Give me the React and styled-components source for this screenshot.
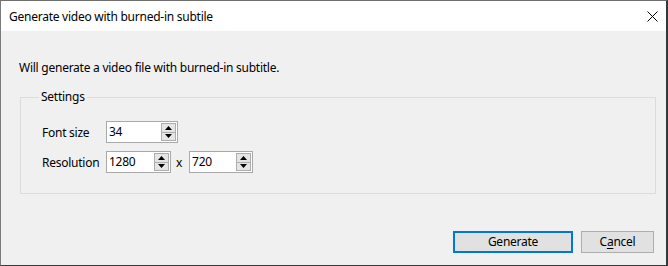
import React from 'react'
import styled, { createGlobalStyle } from 'styled-components'

const Global = createGlobalStyle`
  html, body { margin: 0; padding: 0; background: #f0f0f0; }
  body { font-family: "Noto Sans", "Open Sans", sans-serif; font-size: 12px; color: #000; letter-spacing: -0.25px; }
  * { box-sizing: border-box; }
`

const Window = styled.div`
  width: 668px;
  height: 266px;
  display: flex;
  flex-direction: column;
  background: #f0f0f0;
  border-left: 1px solid #7a7a7a;
  border-top: 1px solid #6f6f6f;
  border-right: 2px solid #2e3b3b;
  border-bottom: 1px solid #3a3a3a;
`

const TitleBar = styled.div`
  height: 30px;
  flex: none;
  background: #fff;
  display: flex;
  align-items: center;
  justify-content: space-between;
  padding-left: 8px;
`

const Title = styled.span`
  font-size: 12px;
`

const CloseButton = styled.div`
  width: 28px;
  height: 30px;
  display: flex;
  align-items: center;
  justify-content: center;
`

const Body = styled.div`
  flex: 1;
  display: flex;
  flex-direction: column;
  padding: 29px 12px 12px 18px;
`

const Intro = styled.div`
  line-height: 16px;
`

const Group = styled.fieldset`
  margin: 14px 0 0 1px;
  width: 636px;
  height: 104px;
  border: 1px solid #dcdcdc;
  padding: 17px 0 0 21px;
  display: flex;
  flex-direction: column;
  gap: 8px;
`

const Legend = styled.legend`
  padding: 0 2px;
  margin-left: -3px;
  line-height: 14px;
`

const Row = styled.div`
  display: flex;
  align-items: center;
  height: 22px;
`

const Label = styled.span`
  width: 64px;
`

const Spin = styled.div`
  width: ${p => p.$w}px;
  height: 22px;
  border: 1px solid #a9a9a9;
  background: #fff;
  display: flex;
  align-items: stretch;
  padding: 1px;
`

const Value = styled.div`
  flex: 1;
  padding-left: 1px;
  line-height: 18px;
`

const Arrows = styled.div`
  width: 15px;
  display: flex;
  flex-direction: column;
`

const ArrowBtn = styled.div`
  flex: 1;
  background: #e5e5e5;
  border: 1px solid #adadad;
  display: flex;
  align-items: center;
  justify-content: center;
  & + & { border-top: none; }
`

const Times = styled.span`
  margin: 0 7px 0 5px;
`

const Footer = styled.div`
  margin-top: auto;
  display: flex;
  justify-content: flex-end;
  gap: 8px;
`

const Button = styled.div`
  width: ${p => p.$w}px;
  height: 22px;
  background: #e1e1e1;
  border: ${p => (p.$default ? '2px solid #0078d7' : '1px solid #adadad')};
  display: flex;
  align-items: center;
  justify-content: center;
  line-height: 16px;
  u { text-decoration-thickness: 1px; text-underline-offset: 2px; }
`

const Tri = ({ up }) => (
  <svg width="7" height="4" viewBox="0 0 7 4">
    <path d={up ? 'M0 4 L3.5 0 L7 4 Z' : 'M0 0 L3.5 4 L7 0 Z'} fill="#000" />
  </svg>
)

const Spinner = ({ value, width }) => (
  <Spin $w={width}>
    <Value>{value}</Value>
    <Arrows>
      <ArrowBtn><Tri up /></ArrowBtn>
      <ArrowBtn><Tri /></ArrowBtn>
    </Arrows>
  </Spin>
)

export default function App() {
  return (
    <Window>
      <Global />
      <TitleBar>
        <Title>Generate video with burned-in subtile</Title>
        <CloseButton>
          <svg width="11" height="11" viewBox="0 0 11 11">
            <path d="M0.5 0.5 L10.5 10.5 M10.5 0.5 L0.5 10.5" stroke="#000" strokeWidth="1" />
          </svg>
        </CloseButton>
      </TitleBar>
      <Body>
        <Intro>Will generate a video file with burned-in subtitle.</Intro>
        <Group>
          <Legend>Settings</Legend>
          <Row>
            <Label>Font size</Label>
            <Spinner value="34" width={72} />
          </Row>
          <Row>
            <Label>Resolution</Label>
            <Spinner value="1280" width={65} />
            <Times>x</Times>
            <Spinner value="720" width={64} />
          </Row>
        </Group>
        <Footer>
          <Button $w={120} $default>Generate</Button>
          <Button $w={73}>C<u>a</u>ncel</Button>
        </Footer>
      </Body>
    </Window>
  )
}
